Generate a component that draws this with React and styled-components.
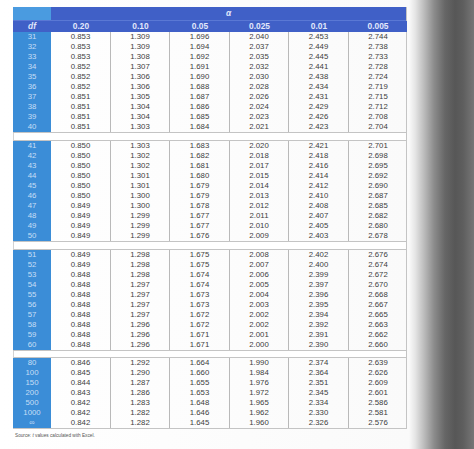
import * as React from 'react';
import styled, { createGlobalStyle } from 'styled-components';

const GlobalStyle = createGlobalStyle`
  html, body {
    margin: 0;
    padding: 0;
    height: 100%;
  }
  body {
    width: 474px;
    height: 449px;
    overflow: hidden;
    font-family: "Liberation Sans", Arial, sans-serif;
    background: linear-gradient(
      to right,
      #ffffff 0px,
      #fafafa 409px,
      #e6e6e6 415px,
      #bcbcbc 424px,
      #8c8c8c 434px,
      #666666 445px,
      #575757 455px,
      #5e5e5e 463px,
      #767676 474px
    );
  }
`;

const COLS = '38px 60px 59px 60px 59px 60px 58px';

const Page = styled.div`
  padding: 7px 0 0 13px;
`;

const Table = styled.div`
  width: 394px;
  border-right: 1px solid #c4c4c4;
  box-sizing: border-box;
`;

const HeaderTop = styled.div`
  display: grid;
  grid-template-columns: 38px 1fr;
  height: 13px;
`;

const HeaderBottom = styled.div`
  display: grid;
  grid-template-columns: ${COLS};
  height: 12px;
  background: #3f5fc6;
  border-top: 1px solid #5a78d4;
  box-sizing: border-box;
`;

const HeadCell = styled.div`
  display: flex;
  align-items: center;
  justify-content: center;
  background: ${(p) => p.$bg || '#4060c7'};
  color: #e2e8fb;
  font-size: 8.4px;
  font-weight: bold;
  font-style: ${(p) => (p.$italic ? 'italic' : 'normal')};
  line-height: 1;
`;

const Group = styled.div`
  border-bottom: 1px solid #c4c4c4;
`;

const Row = styled.div`
  display: grid;
  grid-template-columns: ${COLS};
  height: 10px;
`;

const DfCell = styled.div`
  background: #3b8dd7;
  color: #c6def6;
  font-size: 7.8px;
  display: flex;
  align-items: center;
  justify-content: center;
  line-height: 1;
`;

const ValueCell = styled.div`
  display: flex;
  align-items: center;
  justify-content: center;
  color: #404040;
  font-size: 7.8px;
  line-height: 1;
  border-right: ${(p) => (p.$last ? 'none' : '1px solid #b9b9b9')};
`;

const Separator = styled.div`
  height: ${(p) => p.$h}px;
  box-sizing: border-box;
  border-left: 1px solid #d2d2d2;
  border-bottom: 1px solid #c4c4c4;
  background: #ffffff;
`;

const Source = styled.div`
  margin: 4px 0 0 2px;
  font-size: 4.7px;
  color: #555;
`;

const alphas = ['0.20', '0.10', '0.05', '0.025', '0.01', '0.005'];

const groups = [
  [
    ['31', '0.853', '1.309', '1.696', '2.040', '2.453', '2.744'],
    ['32', '0.853', '1.309', '1.694', '2.037', '2.449', '2.738'],
    ['33', '0.853', '1.308', '1.692', '2.035', '2.445', '2.733'],
    ['34', '0.852', '1.307', '1.691', '2.032', '2.441', '2.728'],
    ['35', '0.852', '1.306', '1.690', '2.030', '2.438', '2.724'],
    ['36', '0.852', '1.306', '1.688', '2.028', '2.434', '2.719'],
    ['37', '0.851', '1.305', '1.687', '2.026', '2.431', '2.715'],
    ['38', '0.851', '1.304', '1.686', '2.024', '2.429', '2.712'],
    ['39', '0.851', '1.304', '1.685', '2.023', '2.426', '2.708'],
    ['40', '0.851', '1.303', '1.684', '2.021', '2.423', '2.704'],
  ],
  [
    ['41', '0.850', '1.303', '1.683', '2.020', '2.421', '2.701'],
    ['42', '0.850', '1.302', '1.682', '2.018', '2.418', '2.698'],
    ['43', '0.850', '1.302', '1.681', '2.017', '2.416', '2.695'],
    ['44', '0.850', '1.301', '1.680', '2.015', '2.414', '2.692'],
    ['45', '0.850', '1.301', '1.679', '2.014', '2.412', '2.690'],
    ['46', '0.850', '1.300', '1.679', '2.013', '2.410', '2.687'],
    ['47', '0.849', '1.300', '1.678', '2.012', '2.408', '2.685'],
    ['48', '0.849', '1.299', '1.677', '2.011', '2.407', '2.682'],
    ['49', '0.849', '1.299', '1.677', '2.010', '2.405', '2.680'],
    ['50', '0.849', '1.299', '1.676', '2.009', '2.403', '2.678'],
  ],
  [
    ['51', '0.849', '1.298', '1.675', '2.008', '2.402', '2.676'],
    ['52', '0.849', '1.298', '1.675', '2.007', '2.400', '2.674'],
    ['53', '0.848', '1.298', '1.674', '2.006', '2.399', '2.672'],
    ['54', '0.848', '1.297', '1.674', '2.005', '2.397', '2.670'],
    ['55', '0.848', '1.297', '1.673', '2.004', '2.396', '2.668'],
    ['56', '0.848', '1.297', '1.673', '2.003', '2.395', '2.667'],
    ['57', '0.848', '1.297', '1.672', '2.002', '2.394', '2.665'],
    ['58', '0.848', '1.296', '1.672', '2.002', '2.392', '2.663'],
    ['59', '0.848', '1.296', '1.671', '2.001', '2.391', '2.662'],
    ['60', '0.848', '1.296', '1.671', '2.000', '2.390', '2.660'],
  ],
  [
    ['80', '0.846', '1.292', '1.664', '1.990', '2.374', '2.639'],
    ['100', '0.845', '1.290', '1.660', '1.984', '2.364', '2.626'],
    ['150', '0.844', '1.287', '1.655', '1.976', '2.351', '2.609'],
    ['200', '0.843', '1.286', '1.653', '1.972', '2.345', '2.601'],
    ['500', '0.842', '1.283', '1.648', '1.965', '2.334', '2.586'],
    ['1000', '0.842', '1.282', '1.646', '1.962', '2.330', '2.581'],
    ['∞', '0.842', '1.282', '1.645', '1.960', '2.326', '2.576'],
  ],
];

const gaps = [8, 8, 7];

export default function App() {
  return (
    <Page>
      <GlobalStyle />
      <Table>
        <HeaderTop>
          <HeadCell $bg="#4a9be0" />
          <HeadCell $italic>α</HeadCell>
        </HeaderTop>
        <HeaderBottom>
          <HeadCell $italic>df</HeadCell>
          {alphas.map((a) => (
            <HeadCell key={a}>{a}</HeadCell>
          ))}
        </HeaderBottom>
        {groups.map((rows, gi) => (
          <React.Fragment key={gi}>
            <Group>
              {rows.map(([df, ...vals]) => (
                <Row key={df}>
                  <DfCell>{df}</DfCell>
                  {vals.map((v, i) => (
                    <ValueCell key={i} $last={i === vals.length - 1}>
                      {v}
                    </ValueCell>
                  ))}
                </Row>
              ))}
            </Group>
            {gi < gaps.length && <Separator $h={gaps[gi]} />}
          </React.Fragment>
        ))}
      </Table>
      <Source>
        Source: <i>t</i> values calculated with Excel.
      </Source>
    </Page>
  );
}
